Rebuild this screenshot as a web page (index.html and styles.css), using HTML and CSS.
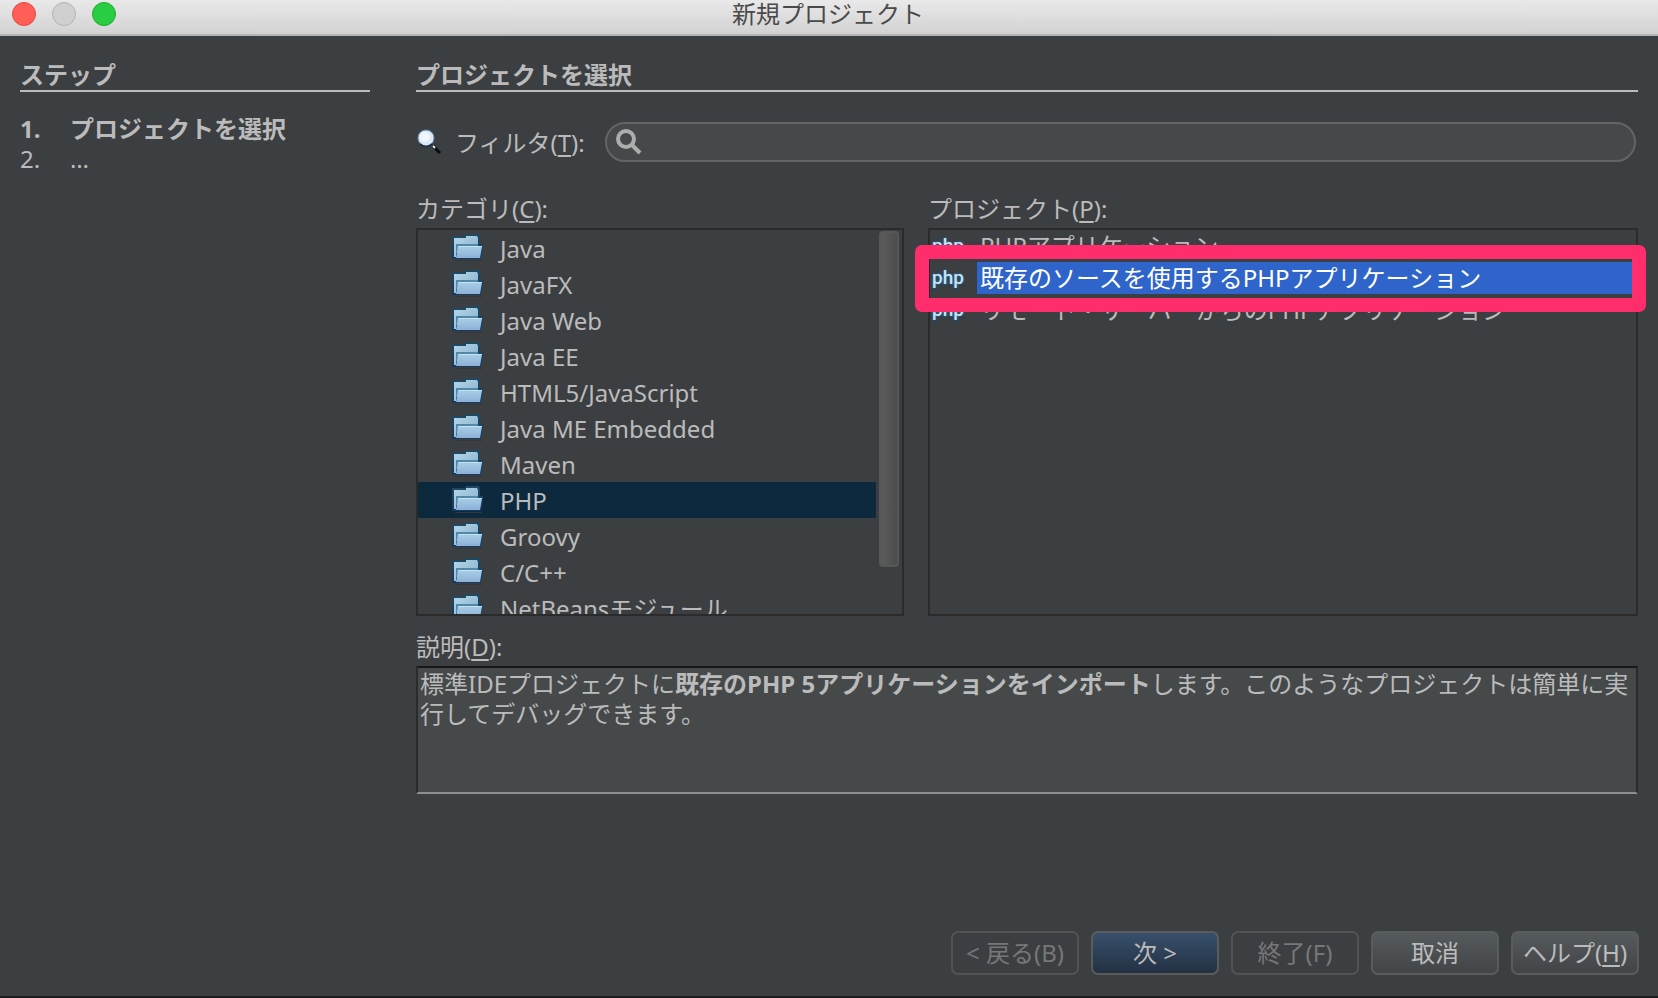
FILE: index.html
```html
<!DOCTYPE html>
<html lang="ja">
<head>
    <meta charset="UTF-8">
    <meta name="viewport" content="width=device-width, initial-scale=1.0">
    <title>新規プロジェクト</title>
    <link rel="stylesheet" href="styles.css">
</head>
<body>
    <svg class="defs" width="0" height="0" aria-hidden="true">
        <defs>
            <linearGradient id="folderBack" x1="0" y1="0" x2="1" y2="1">
                <stop offset="0" stop-color="#b4d6e8"/>
                <stop offset="1" stop-color="#86aecb"/>
            </linearGradient>
            <linearGradient id="folderFront" x1="0" y1="0" x2="0" y2="1">
                <stop offset="0" stop-color="#a9cfe6"/>
                <stop offset="1" stop-color="#8cb0d6"/>
            </linearGradient>
            <linearGradient id="folderEdge" x1="0" y1="0" x2="0" y2="1">
                <stop offset="0" stop-color="#204a63"/>
                <stop offset="1" stop-color="#153a63"/>
            </linearGradient>
            <symbol id="folder" viewBox="0 0 32 28">
                <path d="M3 26h27v1H3z" fill="#33373a"/>
                <path d="M0 2h13l1-2h13l1 3v7h3v3l-2 12H0z" fill="url(#folderEdge)"/>
                <path d="M2 4h12V2h11l1 2v6H6l-2 2v11H2z" fill="url(#folderBack)"/>
                <path d="M4 10h22v2H6v7H4z" fill="#5388a8"/>
                <path d="M6 12h24l-2 12H4z" fill="url(#folderFront)"/>
                <path d="M6 12h24v1H6z" fill="#c1e2f2"/>
            </symbol>
        </defs>
    </svg>

    <header class="titlebar">
        <div class="lights">
            <button class="light close" aria-label="閉じる"></button>
            <button class="light minimize" aria-label="しまう" disabled></button>
            <button class="light zoom" aria-label="拡大"></button>
        </div>
        <h1>新規プロジェクト</h1>
    </header>

    <div class="wizard">
        <aside class="steps">
            <h2>ステップ</h2>
            <ol>
                <li class="current"><span>1.</span>プロジェクトを選択</li>
                <li><span>2.</span>…</li>
            </ol>
        </aside>

        <main class="panel">
            <h2>プロジェクトを選択</h2>

            <div class="filter">
                <svg class="lens" width="26" height="28" viewBox="0 0 26 28" aria-hidden="true">
                    <path d="M17 18l7 7" stroke="#0c0d0e" stroke-width="3"/>
                    <path d="M17 18l2 2" stroke="#e8eef2" stroke-width="2"/>
                    <circle cx="10" cy="10" r="8" fill="#dbe9f7" stroke="#6b90b5" stroke-width="1"/>
                    <circle cx="9" cy="9" r="5" fill="#f0f6fc"/>
                    <path d="M4 16a8 8 0 0 0 12 0" fill="none" stroke="#26333f" stroke-width="2"/>
                </svg>
                <label for="filter">フィルタ(<u>T</u>):</label>
                <div class="search">
                    <svg width="26" height="26" viewBox="0 0 26 26" aria-hidden="true">
                        <circle cx="10" cy="10" r="8" fill="none" stroke="#adadad" stroke-width="4"/>
                        <path d="M16 16l8 8" stroke="#adadad" stroke-width="4"/>
                    </svg>
                    <input id="filter" type="text" accesskey="t">
                </div>
            </div>

            <div class="lists">
                <section class="categories">
                    <h3 id="categoryLabel">カテゴリ(<u>C</u>):</h3>
                    <div class="box">
                        <ul role="listbox" aria-labelledby="categoryLabel" tabindex="0">
                            <li role="option"><svg><use href="#folder"/></svg>Java</li>
                            <li role="option"><svg><use href="#folder"/></svg>JavaFX</li>
                            <li role="option"><svg><use href="#folder"/></svg>Java Web</li>
                            <li role="option"><svg><use href="#folder"/></svg>Java EE</li>
                            <li role="option"><svg><use href="#folder"/></svg>HTML5/JavaScript</li>
                            <li role="option"><svg><use href="#folder"/></svg>Java ME Embedded</li>
                            <li role="option"><svg><use href="#folder"/></svg>Maven</li>
                            <li role="option" class="selected" aria-selected="true"><svg><use href="#folder"/></svg>PHP</li>
                            <li role="option"><svg><use href="#folder"/></svg>Groovy</li>
                            <li role="option"><svg><use href="#folder"/></svg>C/C++</li>
                            <li role="option"><svg><use href="#folder"/></svg>NetBeansモジュール</li>
                        </ul>
                        <div class="scrollbar"><div class="thumb"></div></div>
                    </div>
                </section>

                <section class="projects">
                    <h3 id="projectLabel">プロジェクト(<u>P</u>):</h3>
                    <div class="box">
                        <ul role="listbox" aria-labelledby="projectLabel" tabindex="0">
                            <li role="option"><i>php</i><span>PHPアプリケーション</span></li>
                            <li role="option" class="selected" aria-selected="true"><i>php</i><span>既存のソースを使用するPHPアプリケーション</span></li>
                            <li role="option"><i>php</i><span>リモート・サーバーからのPHPアプリケーション</span></li>
                        </ul>
                        <div class="marker"></div>
                    </div>
                </section>
            </div>

            <h3 id="descriptionLabel">説明(<u>D</u>):</h3>
            <div class="description" aria-labelledby="descriptionLabel">
                標準IDEプロジェクトに<b>既存のPHP 5アプリケーションをインポート</b>します。このようなプロジェクトは簡単に実行してデバッグできます。
            </div>
        </main>
    </div>

    <footer class="buttons">
        <button disabled>&lt; 戻る(B)</button>
        <button class="primary">次 &gt;</button>
        <button disabled>終了(F)</button>
        <button>取消</button>
        <button accesskey="h">ヘルプ(<u>H</u>)</button>
    </footer>
</body>
</html>
```

FILE: styles.css
```css
* {
    margin: 0;
    padding: 0;
    box-sizing: border-box;
}
body {
    display: flex;
    flex-direction: column;
    min-height: 100vh;
    font-family: "Noto Sans", "Noto Sans CJK JP", sans-serif;
    font-size: 24px;
    line-height: 30px;
    color: #bbb;
    background: #3c3f41;
    border-bottom: 2px solid #1b1d20;
}
ul, ol {
    list-style: none;
}
u {
    text-decoration-thickness: 2px;
    text-underline-offset: 3px;
}
button, input {
    font: inherit;
    color: inherit;
}
.defs {
    position: absolute;
}

/* title bar */
.titlebar {
    display: grid;
    grid-template-columns: 1fr auto 1fr;
    height: 36px;
    padding: 0 14px 0 12px;
    background: linear-gradient(#e9e9e9, #d2d2d2);
    border-bottom: 2px solid #b4b4b4;
}
.titlebar h1 {
    font-size: 24px;
    font-weight: 400;
    line-height: 28px;
    color: #4a4a4a;
}
.lights {
    display: flex;
    gap: 16px;
    padding-top: 2px;
}
.light {
    width: 24px;
    height: 24px;
    border: 1px solid #b4b4b4;
    border-radius: 50%;
    background: #d0d0d0;
}
.light.close {
    background: #ff5f57;
    border-color: #e2463f;
}
.light.zoom {
    background: #28cd41;
    border-color: #1aad2c;
}

/* wizard */
.wizard {
    display: flex;
    flex: 1;
    gap: 46px;
    padding: 24px 20px 0;
}
.steps {
    flex: 0 0 350px;
}
.panel {
    flex: 1;
    min-width: 0;
}
h2 {
    height: 32px;
    font-size: 24px;
    font-weight: 700;
    border-bottom: 2px solid #bbb;
}
h3 {
    font-size: 24px;
    font-weight: 400;
    line-height: 28px;
    margin-bottom: 5px;
}
.steps ol {
    margin-top: 22px;
}
.steps li {
    display: flex;
}
.steps li span {
    width: 50px;
}
.steps .current {
    font-weight: 700;
}

.filter {
    display: flex;
    align-items: center;
    margin: 30px 0 33px;
}
.filter label {
    margin: 2px 20px 0 13px;
}
.search {
    display: flex;
    align-items: center;
    flex: 1;
    height: 40px;
    margin-right: 2px;
    padding: 0 9px;
    background: #45494a;
    border: 2px solid #646464;
    border-radius: 20px;
}
.search input {
    flex: 1;
    margin-left: 8px;
    border: none;
    outline: none;
    background: none;
}

/* lists */
.lists {
    display: flex;
    gap: 24px;
    margin-bottom: 17px;
}
.categories {
    flex: 488 0 0;
    min-width: 0;
}
.projects {
    flex: 710 0 0;
    min-width: 0;
}
.box {
    position: relative;
    display: flex;
    height: 388px;
    border: 2px solid #2b2b2b;
}
.box ul {
    flex: 1;
    overflow: hidden;
    white-space: nowrap;
    outline: none;
}
.categories li {
    display: flex;
    height: 36px;
    padding-left: 34px;
    line-height: 38px;
}
.categories li svg {
    width: 32px;
    height: 28px;
    margin: 4px 16px 0 0;
}
.categories .selected {
    background: #0d293e;
}
.scrollbar {
    width: 26px;
    padding: 1px 3px;
}
.thumb {
    height: 336px;
    background: linear-gradient(to right, #5c5c5c, #4d4d4d);
    border: 2px solid #555859;
    border-radius: 4px;
}
.projects li {
    display: flex;
    height: 32px;
    line-height: 32px;
}
.projects li i {
    width: 47px;
    padding-left: 2px;
    font: 500 19px/32px Roboto, sans-serif;
    color: #c3e2f7;
    text-shadow: 0 0 2px #2f6288, 0 0 3px #2f6288, 0 2px 2px #1f3e55;
}
.projects li span {
    flex: 1;
    padding-left: 3px;
}
.projects .selected span {
    color: #fff;
    background: #2f65ca;
}
.marker {
    position: absolute;
    top: 15px;
    left: -15px;
    right: -10px;
    height: 67px;
    border: 14px solid #ff2d6b;
    border-radius: 7px;
}

.description {
    height: 128px;
    padding: 1px 2px;
    background: #45494a;
    border: 2px solid #2b2b2b;
    border-top-color: #17181a;
    border-bottom-color: #8c8f90;
}

/* buttons */
.buttons {
    display: flex;
    justify-content: flex-end;
    gap: 12px;
    padding: 0 19px 21px;
}
.buttons button {
    width: 128px;
    height: 44px;
    white-space: nowrap;
    background: linear-gradient(#555a5c, #414547);
    border: 2px solid #5a5c5c;
    border-radius: 7px;
}
.buttons .primary {
    background: linear-gradient(#384f6b, #233143);
}
.buttons button:disabled {
    color: #777;
    background: none;
    border-color: #525454;
}
```
